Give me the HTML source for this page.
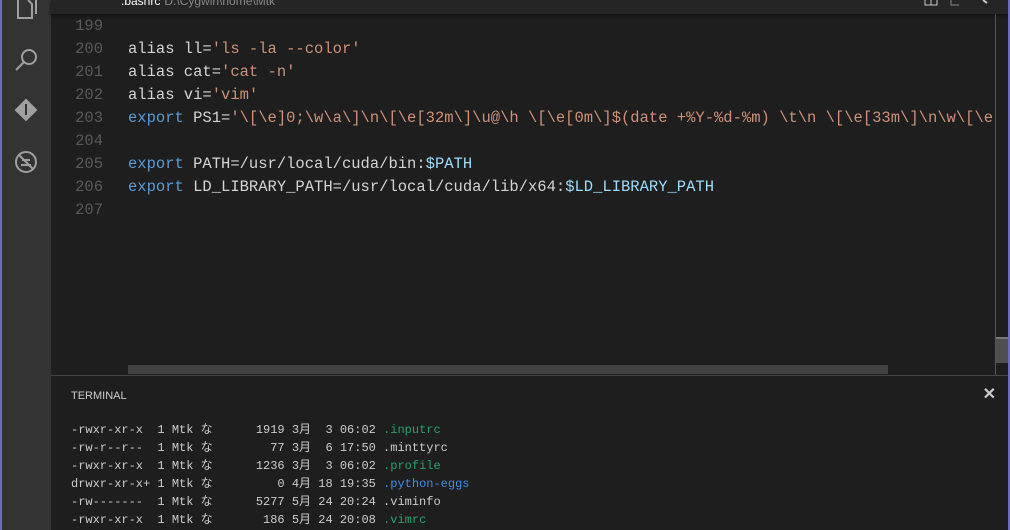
<!DOCTYPE html><html><head><style>
body{margin:0;width:1010px;height:530px;overflow:hidden;background:#1e1e1e;position:relative;font-family:"Liberation Mono",monospace}
.act{position:absolute;left:0;top:0;width:51px;height:530px;background:#333;border-left:2px solid #6c6cc4;box-sizing:border-box}
.tabs{position:absolute;left:51px;top:0;right:0;height:14px;background:#252526;box-shadow:0 2px 3px #111}
.tab{position:absolute;left:70px;top:-6px;color:#fff;font:12px "Liberation Sans",sans-serif}
.tab span{color:#888;margin-left:4px}
.clip{position:absolute;left:0;top:14px;width:995px;height:350px;overflow:hidden}
.ln{position:absolute;left:51px;width:52px;text-align:right;color:#5a5a5a;font-size:15.5px}
.cd{position:absolute;left:128px;color:#d4d4d4;font-size:15.5px;white-space:pre}
.k{color:#569cd6}.s{color:#ce9178}.v{color:#9cdcfe}
.vs{position:absolute;left:995px;top:14px;width:13px;height:361px;border-left:1px solid #555}
.hs{position:absolute;left:128px;top:365px;width:760px;height:9px;background:#424242}
.pn{position:absolute;left:51px;top:375px;right:2px;bottom:0;border-top:1px solid #444;background:#1e1e1e}
.tt{position:absolute;left:20px;top:14px;color:#ccc;font:11px "Liberation Sans",sans-serif}
.x{position:absolute;right:12px;top:8px;color:#ccc;font:bold 16px "Liberation Sans",sans-serif}
.tm{position:absolute;left:20px;top:45px;color:#ccc;font-size:12px;line-height:18px;white-space:pre;font-family:"Liberation Mono","Noto Sans CJK JP",monospace}
.g{color:#26a269}.b{color:#3b8eea}
.rb{position:absolute;right:0;top:0;width:2px;height:530px;background:#6c6cc4}
</style></head><body>
<div class="act">
<svg width="51" height="200" style="position:absolute;left:-2px;top:0" fill="none" stroke="#a0a0a0" stroke-width="2">
<path d="M18 0v18h14V4l-4-4"/><path d="M36 -2v16"/>
<circle cx="29" cy="57" r="7"/><path d="M24 62l-8 8"/>
<path d="M26 100l10 10-10 10-10-10z" fill="#a0a0a0"/><path d="M26 104v11" stroke="#333"/>
<circle cx="26" cy="162" r="10"/><path d="M19 155l14 14M22 160h8M21 165h10" />
</svg></div>
<div class="tabs"><div class="tab">.bashrc<span>D:\Cygwin\home\Mtk</span></div>
<svg style="position:absolute;left:872px;top:0" width="90" height="8" fill="none" stroke="#ccc"><path d="M2 0v5h12V0M8 0v5"/><path d="M28 0v5h8" stroke="#888"/><path d="M60 0l4 3" stroke-width="2"/></svg></div>
<div class="clip">
<div class="ln" style="top:3px">199</div>
<div class="ln" style="top:26px">200</div><div class="cd" style="top:26px">alias ll=<span class="s">'ls -la --color'</span></div>
<div class="ln" style="top:49px">201</div><div class="cd" style="top:49px">alias cat=<span class="s">'cat -n'</span></div>
<div class="ln" style="top:72px">202</div><div class="cd" style="top:72px">alias vi=<span class="s">'vim'</span></div>
<div class="ln" style="top:95px">203</div><div class="cd" style="top:95px"><span class="k">export</span> PS1=<span class="s">'\[\e]0;\w\a\]\n\[\e[32m\]\u@\h \[\e[0m\]$(date +%Y-%d-%m) \t\n \[\e[33m\]\n\w\[\e[0m</span></div>
<div class="ln" style="top:118px">204</div>
<div class="ln" style="top:141px">205</div><div class="cd" style="top:141px"><span class="k">export</span> PATH=/usr/local/cuda/bin:<span class="v">$PATH</span></div>
<div class="ln" style="top:164px">206</div><div class="cd" style="top:164px"><span class="k">export</span> LD_LIBRARY_PATH=/usr/local/cuda/lib/x64:<span class="v">$LD_LIBRARY_PATH</span></div>
<div class="ln" style="top:187px">207</div>
</div>
<div class="vs"><div style="position:absolute;top:323px;left:0;width:13px;height:24px;background:#4f4f4f;border-top:2px solid #777"></div></div>
<div class="hs"></div>
<div class="pn"><div class="tt">TERMINAL</div><div class="x">✕</div>
<div class="tm">-rwxr-xr-x  1 Mtk な      1919 3月  3 06:02 <span class="g">.inputrc</span>
-rw-r--r--  1 Mtk な        77 3月  6 17:50 .minttyrc
-rwxr-xr-x  1 Mtk な      1236 3月  3 06:02 <span class="g">.profile</span>
drwxr-xr-x+ 1 Mtk な         0 4月 18 19:35 <span class="b">.python-eggs</span>
-rw-------  1 Mtk な      5277 5月 24 20:24 .viminfo
-rwxr-xr-x  1 Mtk な       186 5月 24 20:08 <span class="g">.vimrc</span></div></div>
<div class="rb"></div>
</body></html>
